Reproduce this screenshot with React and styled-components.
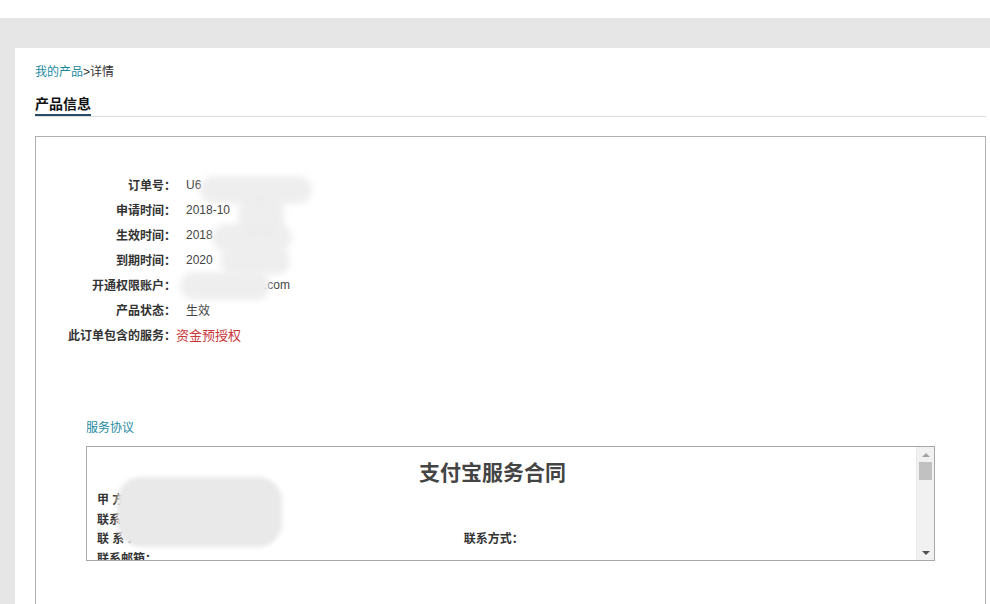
import React from "react";
import styled, { createGlobalStyle } from "styled-components";

const GlobalStyle = createGlobalStyle`
  html, body {
    margin: 0;
    padding: 0;
    background: #fff;
    font-family: "Liberation Sans", "Noto Sans CJK SC", sans-serif;
    font-size: 12px;
    color: #333;
  }
`;

const orderRows = [
  { label: "订单号", value: "U6", smudge: { left: 14, width: 112, top: -2 } },
  { label: "申请时间", value: "2018-10", smudge: { left: 52, width: 46, top: -8, height: 40 } },
  { label: "生效时间", value: "2018", smudge: { left: 26, width: 80, top: -4 } },
  { label: "到期时间", value: "2020", smudge: { left: 34, width: 70, top: -6 } },
  { label: "开通权限账户", value: "", tail: ".com", smudge: { left: -6, width: 90, top: -6 } },
  { label: "产品状态", value: "生效" },
  { label: "此订单包含的服务", value: "资金预授权", red: true },
];

const App = () => {
  return (
    <>
      <GlobalStyle />
      <Page>
        <TopStrip />
        <Body>
          <Panel>
            <Breadcrumb>
              <a>我的产品</a>&gt;详情
            </Breadcrumb>
            <SectionHead>
              <h2>产品信息</h2>
            </SectionHead>

            <InfoBox>
              <InfoList>
                {orderRows.map((row) => (
                  <InfoRow key={row.label}>
                    <Label>{row.label}：</Label>
                    <Value $red={row.red}>
                      {row.value}
                      {row.tail && <Tail>{row.tail}</Tail>}
                      {row.smudge && (
                        <Smudge
                          style={{
                            left: row.smudge.left,
                            width: row.smudge.width,
                            top: row.smudge.top,
                            height: row.smudge.height || 28,
                          }}
                        />
                      )}
                    </Value>
                  </InfoRow>
                ))}
              </InfoList>

              <AgreementTitle>服务协议</AgreementTitle>
              <Contract>
                <ContractText>
                  <h3>支付宝服务合同</h3>
                  <ContractLine>甲 方</ContractLine>
                  <ContractLine>联系地址</ContractLine>
                  <ContractLine>
                    <span>联 系 人：</span>
                    <span className="right">联系方式：</span>
                  </ContractLine>
                  <ContractLine>联系邮箱：</ContractLine>
                  <BigSmudge />
                </ContractText>
                <ScrollBar>
                  <Arrow $up />
                  <Thumb />
                  <Track />
                  <Arrow />
                </ScrollBar>
              </Contract>
            </InfoBox>
          </Panel>
        </Body>
      </Page>
    </>
  );
};

const Page = styled.div`
  width: 990px;
  height: 604px;
  overflow: hidden;
  background: #fff;
`;

const TopStrip = styled.div`
  height: 18px;
  background: #fff;
`;

const Body = styled.div`
  background: #e6e6e6;
  padding: 30px 0 0 15px;
  height: 586px;
  box-sizing: border-box;
`;

const Panel = styled.div`
  background: #fff;
  height: 100%;
  padding: 16px 4px 0 20px;
  box-sizing: border-box;
`;

const Breadcrumb = styled.div`
  font-size: 12px;
  line-height: 16px;
  color: #333;

  a {
    color: #1d8aa0;
    text-decoration: none;
  }
`;

const SectionHead = styled.div`
  margin-top: 15px;
  border-bottom: 1px solid #dcdcdc;
  height: 21px;

  h2 {
    display: inline-block;
    margin: 0;
    font-size: 14px;
    font-weight: bold;
    line-height: 18px;
    color: #111;
    border-bottom: 2px solid #2b4a66;
    padding-bottom: 1px;
  }
`;

const InfoBox = styled.div`
  margin-top: 19px;
  border: 1px solid #b0b0b0;
  height: 500px;
  padding: 35px 50px 0 50px;
  box-sizing: border-box;
`;

const InfoList = styled.div`
  display: flex;
  flex-direction: column;
`;

const InfoRow = styled.div`
  display: flex;
  height: 25px;
  align-items: center;
`;

const Label = styled.div`
  width: 140px;
  margin-left: -50px;
  text-align: right;
  font-weight: bold;
  color: #333;
  flex-shrink: 0;
`;

const Value = styled.div`
  position: relative;
  margin-left: ${({ $red }) => ($red ? "0" : "10px")};
  color: ${({ $red }) => ($red ? "#c8373a" : "#444")};
  font-size: ${({ $red }) => ($red ? "13px" : "12px")};
`;

const Tail = styled.span`
  margin-left: 78px;
`;

const Smudge = styled.span`
  position: absolute;
  background: #ededed;
  border-radius: 14px;
  filter: blur(3px);
  opacity: 0.92;
`;

const AgreementTitle = styled.div`
  margin-top: 73px;
  color: #1d8aa0;
  font-size: 12px;
  line-height: 16px;
`;

const Contract = styled.div`
  margin-top: 10px;
  border: 1px solid #a8a8a8;
  height: 115px;
  box-sizing: border-box;
  display: flex;
  overflow: hidden;
`;

const ContractText = styled.div`
  position: relative;
  flex: 1;
  padding: 12px 10px 0 10px;
  overflow: hidden;

  h3 {
    margin: 0 0 4px;
    text-align: center;
    font-size: 21px;
    line-height: 28px;
    font-weight: bold;
    color: #444;
    padding-right: 18px;
  }
`;

const ContractLine = styled.div`
  display: flex;
  font-weight: bold;
  font-size: 12px;
  line-height: 19.5px;
  color: #333;

  .right {
    margin-left: 312px;
  }
`;

const BigSmudge = styled.div`
  position: absolute;
  left: 30px;
  top: 30px;
  width: 165px;
  height: 70px;
  background: #e9e9e9;
  border-radius: 24px;
  filter: blur(2px);
`;

const ScrollBar = styled.div`
  width: 17px;
  background: #f1f1f1;
  display: flex;
  flex-direction: column;
  align-items: center;
  border-left: 1px solid #e8e8e8;
`;

const Arrow = styled.div`
  height: 15px;
  width: 100%;
  display: flex;
  align-items: center;
  justify-content: center;

  &::before {
    content: "";
    border-left: 4px solid transparent;
    border-right: 4px solid transparent;
    ${({ $up }) =>
      $up ? "border-bottom: 4px solid #a3a3a3;" : "border-top: 4px solid #505050;"}
  }
`;

const Thumb = styled.div`
  width: 13px;
  height: 18px;
  background: #c1c1c1;
`;

const Track = styled.div`
  flex: 1;
`;

export default App;
